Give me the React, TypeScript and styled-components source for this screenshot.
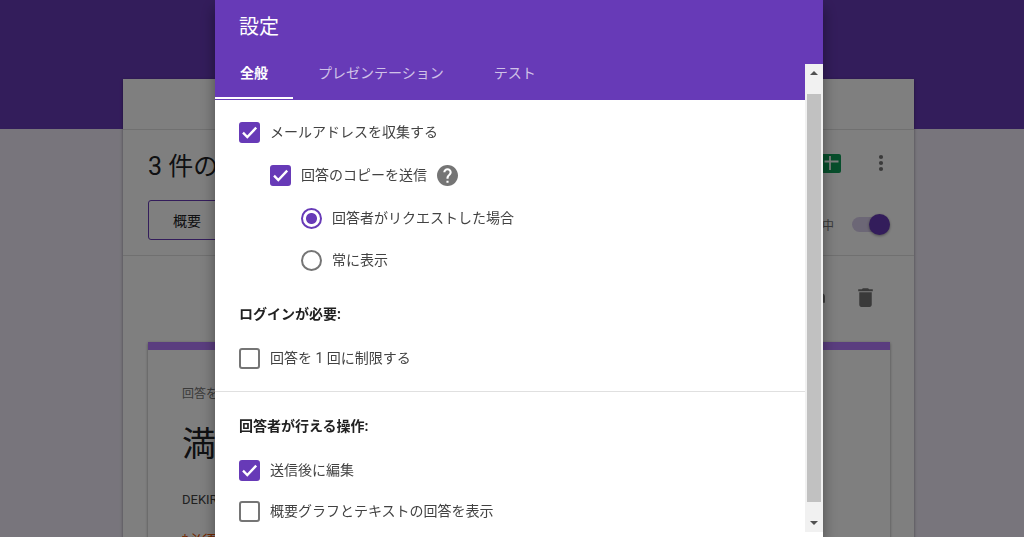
import React from "react";
import styled, { createGlobalStyle } from "styled-components";

const purple = "#673ab7";

const Global = createGlobalStyle`
  * { box-sizing: border-box; }
  body { margin: 0; overflow: hidden; background: #f0ebf8; }
  body, button, input { font-family: Roboto, "Noto Sans CJK JP", sans-serif; }
  h1, h2, h3, p, fieldset { margin: 0; padding: 0; border: 0; min-width: 0; }
`;

const Page = styled.div`
  height: 100vh;
  overflow: hidden;
  padding: 79px 0 0 13px;
  background: linear-gradient(${purple} 129px, #f0ebf8 129px);
`;

const Sheet = styled.main`
  max-width: 791px;
  min-height: 100%;
  margin: 0 auto;
  background: #fff;
  box-shadow: 0 1px 3px rgba(0, 0, 0, 0.4);
`;

const SheetTabs = styled.div`
  height: 51px;
  border-bottom: 1px solid #e0e0e0;
`;

const Summary = styled.header`
  padding: 19px 24px 0 25px;
  border-bottom: 1px solid #e0e0e0;
`;

const Row = styled.div<{ $h: number }>`
  display: flex;
  align-items: center;
  justify-content: space-between;
  height: ${(p) => p.$h}px;
`;

const Count = styled.h1`
  font-size: 25px;
  line-height: 36px;
  font-weight: 400;
  color: #202124;
`;

const Icons = styled.div<{ $gap: number; $raise?: number }>`
  display: flex;
  align-items: center;
  gap: ${(p) => p.$gap}px;
  padding-bottom: ${(p) => p.$raise || 0}px;
`;

const IconButton = styled.button`
  display: flex;
  padding: 0;
  border: 0;
  background: none;
  color: #757575;
`;

const ViewButton = styled.button`
  width: 112px;
  height: 40px;
  padding: 0 24px;
  border: 1px solid ${purple};
  border-radius: 3px;
  background: none;
  color: #202124;
  font-size: 14px;
  text-align: left;
`;

const Accepting = styled.label`
  display: flex;
  align-items: center;
  gap: 18px;
  padding-top: 9px;
  color: #757575;
  font-size: 12px;
`;

const Switch = styled.input`
  appearance: none;
  display: flex;
  align-items: center;
  justify-content: flex-end;
  width: 38px;
  height: 15px;
  margin: 0;
  border-radius: 8px;
  background: #d9cfec;
  &::before {
    content: "";
    width: 21px;
    height: 21px;
    flex: none;
    border-radius: 50%;
    background: ${purple};
    box-shadow: 0 1px 3px rgba(0, 0, 0, 0.4);
  }
`;

const Toolbar = styled.div`
  display: flex;
  justify-content: flex-end;
  align-items: center;
  height: 86px;
  padding: 0 36px 4px 0;
`;

const FormCard = styled.section`
  margin: 0 24px 0 25px;
  height: 300px;
  padding: 34px;
  border-top: 8px solid #b57bff;
  box-shadow: 0 1px 3px rgba(0, 0, 0, 0.4);
`;

const FormNote = styled.p`
  font-size: 12px;
  line-height: 20px;
  color: #757575;
`;

const FormTitle = styled.h2`
  padding: 16px 0 22px;
  font-size: 34px;
  line-height: 48px;
  font-weight: 400;
  color: #202124;
`;

const FormOwner = styled.p`
  font-size: 13px;
  line-height: 20px;
  color: #424242;
`;

const FormWarning = styled.p`
  padding-top: 18px;
  font-size: 14px;
  line-height: 24px;
  color: #e65100;
`;

const Overlay = styled.div`
  position: fixed;
  inset: 0;
  display: flex;
  justify-content: center;
  padding-left: 14px;
  background: rgba(0, 0, 0, 0.5);
`;

const Dialog = styled.div`
  position: relative;
  width: 100%;
  max-width: 608px;
  height: 100%;
  overflow: hidden;
  background: #fff;
  box-shadow: 0 8px 14px rgba(0, 0, 0, 0.4);
`;

const DialogHead = styled.header`
  padding-bottom: 1px;
  background: ${purple};
`;

const DialogTitle = styled.h2`
  padding: 12px 24px 0;
  font-size: 20px;
  line-height: 30px;
  font-weight: 400;
  color: #fff;
`;

const Tabs = styled.div`
  display: flex;
  padding-top: 6px;
`;

const Tab = styled.button<{ $active?: boolean }>`
  height: 51px;
  padding: 0 25px 2px;
  border: 0;
  border-bottom: 2px solid ${(p) => (p.$active ? "#fff" : "transparent")};
  background: none;
  color: ${(p) => (p.$active ? "#fff" : "rgba(255, 255, 255, 0.7)")};
  font-size: 14px;
  font-weight: ${(p) => (p.$active ? 700 : 400)};
  white-space: nowrap;
`;

const Group = styled.fieldset<{ $line?: boolean }>`
  margin-right: 17px;
  padding: 11px 24px 0;
  border-bottom: ${(p) => (p.$line ? "1px solid #e0e0e0" : "0")};
`;

const GroupTitle = styled.h3<{ $top: number }>`
  padding-top: ${(p) => p.$top}px;
  font-size: 14px;
  line-height: 24px;
  font-weight: 700;
  color: #212121;
`;

const Option = styled.label<{ $level?: number; $h?: number }>`
  display: flex;
  align-items: center;
  gap: 10px;
  height: ${(p) => p.$h || 43}px;
  padding-left: ${(p) => (p.$level || 0) * 31}px;
  font-size: 14px;
  color: #424242;
`;

const OptionText = styled.span`
  padding-bottom: 4px;
`;

const Tick = styled.span`
  display: grid;
  width: 21px;
  height: 21px;
  svg { grid-area: 1 / 1; pointer-events: none; }
  input:not(:checked) + svg { display: none; }
`;

const Box = styled.input`
  appearance: none;
  grid-area: 1 / 1;
  width: 21px;
  height: 21px;
  margin: 0;
  border: 2px solid #757575;
  border-radius: 3px;
  &:checked { border-color: ${purple}; background: ${purple}; }
`;

const Radio = styled.input`
  appearance: none;
  width: 21px;
  height: 21px;
  margin: 0;
  border: 2px solid #757575;
  border-radius: 50%;
  &:checked {
    border-color: ${purple};
    background: radial-gradient(circle, ${purple} 5px, transparent 6px);
  }
`;

const Scrollbar = styled.div`
  position: absolute;
  top: 64px;
  right: 0;
  bottom: 5px;
  width: 18px;
  padding: 0 2px;
  display: flex;
  flex-direction: column;
  background: #f1f1f1;
`;

const Arrow = styled.span<{ $down?: boolean }>`
  display: flex;
  align-items: ${(p) => (p.$down ? "flex-end" : "flex-start")};
  justify-content: center;
  height: 30px;
  padding: 7px 0;
`;

const Thumb = styled.span`
  flex: 1;
  background: #c1c1c1;
`;

function Check({ label, checked }: { label: string; checked?: boolean }) {
  return (
    <>
      <Tick>
        <Box type="checkbox" defaultChecked={checked} />
        <svg width="21" height="21" viewBox="0 0 21 21" fill="none" stroke="#fff" strokeWidth="2.4">
          <path d="M4 10.700l4.300 4.300 8.900-9.300" />
        </svg>
      </Tick>
      <OptionText>{label}</OptionText>
    </>
  );
}

export default function App() {
  return (
    <>
      <Global />
      <Page>
        <Sheet>
          <SheetTabs />
          <Summary>
            <Row $h={36}>
              <Count>3 件の回答</Count>
              <Icons $gap={31} $raise={9}>
                <IconButton aria-label="スプレッドシート">
                  <svg width="20" height="20" viewBox="0 0 20 20">
                    <rect width="20" height="19" y="1" rx="2" fill="#0f9d58" />
                    <path d="M3.500 8.500h14M9 3v14" stroke="#fff" strokeWidth="1.8" />
                  </svg>
                </IconButton>
                <IconButton aria-label="その他">
                  <svg width="18" height="24" viewBox="0 0 18 24" fill="currentColor">
                    <circle cx="9" cy="6" r="2.100" /><circle cx="9" cy="12" r="2.100" /><circle cx="9" cy="18" r="2.100" />
                  </svg>
                </IconButton>
              </Icons>
            </Row>
            <Row $h={70}>
              <ViewButton>概要</ViewButton>
              <Accepting>回答を受付中<Switch type="checkbox" role="switch" defaultChecked /></Accepting>
            </Row>
          </Summary>
          <Toolbar>
            <Icons $gap={26}>
              <IconButton aria-label="印刷">
                <svg width="25" height="25" viewBox="0 0 24 24" fill="currentColor">
                  <path d="M19 8H5c-1.66 0-3 1.34-3 3v6h4v4h12v-4h4v-6c0-1.66-1.34-3-3-3zm-3 11H8v-5h8v5zm3-7c-.55 0-1-.45-1-1s.45-1 1-1 1 .45 1 1-.45 1-1 1zm-1-9H6v4h12V3z" />
                </svg>
              </IconButton>
              <IconButton aria-label="削除">
                <svg width="25" height="25" viewBox="0 0 24 24" fill="currentColor">
                  <path d="M6 19c0 1.1.9 2 2 2h8c1.1 0 2-.9 2-2V7H6v12zM19 4h-3.500l-1-1h-5l-1 1H5v2h14V4z" />
                </svg>
              </IconButton>
            </Icons>
          </Toolbar>
          <FormCard>
            <FormNote>回答を</FormNote>
            <FormTitle>満足</FormTitle>
            <FormOwner>DEKIRU</FormOwner>
            <FormWarning>*必須</FormWarning>
          </FormCard>
        </Sheet>
      </Page>
      <Overlay>
        <Dialog role="dialog" aria-labelledby="settings-title">
          <DialogHead>
            <DialogTitle id="settings-title">設定</DialogTitle>
            <Tabs role="tablist">
              <Tab role="tab" aria-selected $active>全般</Tab>
              <Tab role="tab">プレゼンテーション</Tab>
              <Tab role="tab">テスト</Tab>
            </Tabs>
          </DialogHead>
          <Group $line>
            <Option><Check label="メールアドレスを収集する" checked /></Option>
            <Option $level={1}>
              <Check label="回答のコピーを送信" checked />
              <svg width="21" height="21" viewBox="2 2 20 20" fill="#757575">
                <path d="M12 2C6.480 2 2 6.480 2 12s4.480 10 10 10 10-4.480 10-10S17.520 2 12 2zm1 17h-2v-2h2v2zm2.070-7.750l-.9.920C13.450 12.900 13 13.500 13 15h-2v-.5c0-1.100.45-2.100 1.170-2.830l1.240-1.260c.37-.36.590-.86.590-1.410 0-1.100-.9-2-2-2s-2 .9-2 2H8c0-2.210 1.790-4 4-4s4 1.790 4 4c0 .88-.36 1.680-.93 2.250z" />
              </svg>
            </Option>
            <Option $level={2}><Radio type="radio" name="copy" defaultChecked /><OptionText>回答者がリクエストした場合</OptionText></Option>
            <Option $level={2} $h={41}><Radio type="radio" name="copy" /><OptionText>常に表示</OptionText></Option>
            <GroupTitle $top={21}>ログインが必要:</GroupTitle>
            <Option $h={65}><Check label="回答を 1 回に制限する" /></Option>
          </Group>
          <Group>
            <GroupTitle $top={11}>回答者が行える操作:</GroupTitle>
            <Option $h={65}><Check label="送信後に編集" checked /></Option>
            <Option $h={17}><Check label="概要グラフとテキストの回答を表示" /></Option>
          </Group>
          <Scrollbar aria-hidden="true">
            <Arrow><svg width="8" height="4" viewBox="0 0 8 4"><path d="M0 4l4-4 4 4z" fill="#505050" /></svg></Arrow>
            <Thumb />
            <Arrow $down><svg width="8" height="4" viewBox="0 0 8 4"><path d="M0 0l4 4 4-4z" fill="#505050" /></svg></Arrow>
          </Scrollbar>
        </Dialog>
      </Overlay>
    </>
  );
}
